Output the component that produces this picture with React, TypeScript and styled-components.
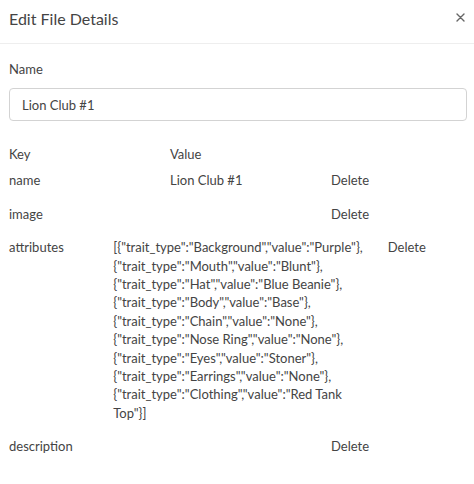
import React from "react";
import styled, { createGlobalStyle } from "styled-components";

const Global = createGlobalStyle`
  html, body { margin: 0; padding: 0; background: #fff; }
  body { font-family: Lato, "Noto Sans", sans-serif; color: #444; }
`;

const Modal = styled.div`
  width: 474px;
  background: #fff;
`;

const Header = styled.div`
  display: flex;
  align-items: center;
  justify-content: space-between;
  height: 44px;
  padding: 0 8px 0 9px;
  border-bottom: 1px solid #eeeeee;
  box-sizing: border-box;
`;

const Title = styled.h2`
  margin: 0;
  font-size: 16px;
  font-weight: 400;
  color: #444;
  padding-bottom: 6px;
`;

const Close = styled.button`
  border: none;
  background: none;
  padding: 0;
  width: 12px;
  height: 12px;
  display: flex;
  align-items: center;
  justify-content: center;
  cursor: pointer;
  margin-bottom: 8px;
`;

const Body = styled.div`
  padding: 16px 7px 0 9px;
`;

const Label = styled.div`
  font-size: 13px;
  line-height: 18px;
  color: #444;
  margin-bottom: 10px;
`;

const Input = styled.input`
  display: block;
  width: 100%;
  box-sizing: border-box;
  height: 33px;
  border: 1px solid #d3d3d3;
  border-radius: 4px;
  padding: 0 12px;
  font-family: inherit;
  font-size: 13px;
  color: #444;
  outline: none;
`;

const Table = styled.div`
  margin-top: 24px;
  display: flex;
  flex-direction: column;
`;

const Row = styled.div<{ $head?: boolean }>`
  display: grid;
  grid-template-columns: repeat(3, 1fr);
  column-gap: 25px;
  font-size: 13px;
  line-height: 18.4px;
  color: #444;
  padding-bottom: ${(p) => (p.$head ? "8px" : "15px")};
`;

const Cell = styled.div`
  min-width: 0;
`;

const ValueCell = styled.div`
  min-width: auto;
`;

const DeleteLink = styled.span`
  cursor: pointer;
`;

const rows: [string, string][] = [
  ["name", "Lion Club #1"],
  ["image", ""],
  [
    "attributes",
    '[{"trait_type":"Background","value":"Purple"},{"trait_type":"Mouth","value":"Blunt"},{"trait_type":"Hat","value":"Blue Beanie"},{"trait_type":"Body","value":"Base"},{"trait_type":"Chain","value":"None"},{"trait_type":"Nose Ring","value":"None"},{"trait_type":"Eyes","value":"Stoner"},{"trait_type":"Earrings","value":"None"},{"trait_type":"Clothing","value":"Red Tank Top"}]',
  ],
  ["description", ""],
];

export default function App() {
  return (
    <Modal>
      <Global />
      <Header>
        <Title>Edit File Details</Title>
        <Close aria-label="Close">
          <svg width="9" height="9" viewBox="0 0 9 9">
            <path d="M1 1L8 8M8 1L1 8" stroke="#666" strokeWidth="1.4" strokeLinecap="round" />
          </svg>
        </Close>
      </Header>
      <Body>
        <Label>Name</Label>
        <Input defaultValue="Lion Club #1" />
        <Table>
          <Row $head>
            <Cell>Key</Cell>
            <Cell>Value</Cell>
            <Cell />
          </Row>
          {rows.map(([k, v]) => (
            <Row key={k}>
              <Cell>{k}</Cell>
              <ValueCell>{v}</ValueCell>
              <Cell>
                <DeleteLink>Delete</DeleteLink>
              </Cell>
            </Row>
          ))}
        </Table>
      </Body>
    </Modal>
  );
}
